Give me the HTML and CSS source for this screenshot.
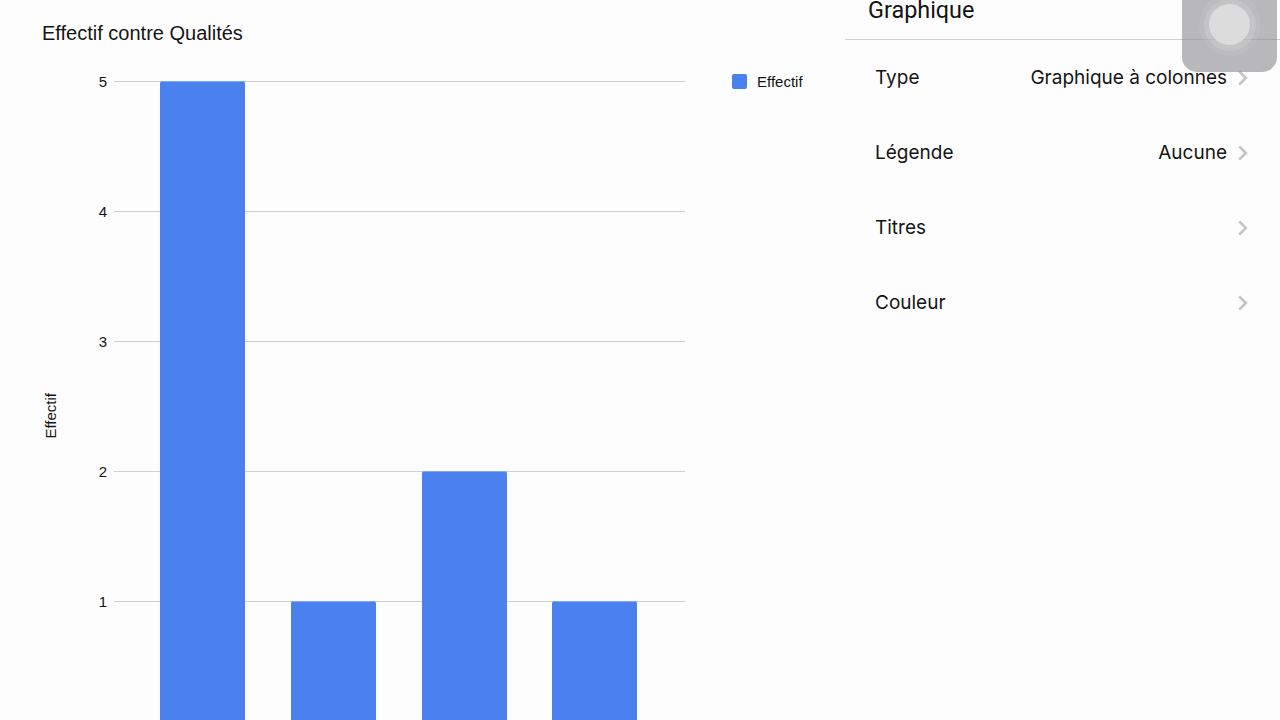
FILE: index.html
```html
<!DOCTYPE html>
<html lang="fr">
<head>
    <meta charset="UTF-8">
    <title>Graphique</title>
    <link rel="stylesheet" href="styles.css">
</head>
<body>
    <main class="chart-pane">
        <h1 class="chart-title">Effectif contre Qualités</h1>
        <div class="chart">
            <div class="axis-title">Effectif</div>
            <div class="axis-labels">
                <span>5</span>
                <span>4</span>
                <span>3</span>
                <span>2</span>
                <span>1</span>
            </div>
            <div class="plot">
                <div class="grid-row"></div>
                <div class="grid-row"></div>
                <div class="grid-row"></div>
                <div class="grid-row"></div>
                <div class="grid-row"></div>
                <div class="bars">
                    <div class="bar" style="height: 650px"></div>
                    <div class="bar" style="height: 130px"></div>
                    <div class="bar" style="height: 260px"></div>
                    <div class="bar" style="height: 130px"></div>
                </div>
            </div>
            <div class="legend">
                <span class="legend-swatch"></span>
                <span>Effectif</span>
            </div>
        </div>
    </main>

    <aside class="settings-pane">
        <h2 class="settings-title">Graphique</h2>
        <ul class="settings-list">
            <li class="settings-row">
                <span>Type</span>
                <span class="settings-value">Graphique à colonnes</span>
                <svg class="chevron" viewBox="0 0 10 16"><path d="M2 2l6 6-6 6"/></svg>
            </li>
            <li class="settings-row">
                <span>Légende</span>
                <span class="settings-value">Aucune</span>
                <svg class="chevron" viewBox="0 0 10 16"><path d="M2 2l6 6-6 6"/></svg>
            </li>
            <li class="settings-row">
                <span>Titres</span>
                <svg class="chevron" viewBox="0 0 10 16"><path d="M2 2l6 6-6 6"/></svg>
            </li>
            <li class="settings-row">
                <span>Couleur</span>
                <svg class="chevron" viewBox="0 0 10 16"><path d="M2 2l6 6-6 6"/></svg>
            </li>
        </ul>
    </aside>

    <!-- iOS assistive touch button -->
    <div class="touch-button">
        <div class="touch-ring-outer">
            <div class="touch-ring-inner">
                <div class="touch-dot"></div>
            </div>
        </div>
    </div>
</body>
</html>
```

FILE: styles.css
```css
* {
    margin: 0;
    padding: 0;
    box-sizing: border-box;
}

body {
    display: flex;
    height: 720px;
    overflow: hidden;
    background-color: #fefdfe;
    color: #141414;
    font-family: "Liberation Sans", Arial, sans-serif;
}

/* Chart */
.chart-pane {
    flex: 0 0 845px;
    padding: 22px 0 0 42px;
}

.chart-title {
    font-size: 20px;
    font-weight: normal;
    line-height: 22px;
    margin-bottom: 37px;
}

.chart {
    display: flex;
    align-items: flex-start;
}

.axis-title {
    writing-mode: vertical-rl;
    transform: rotate(180deg);
    width: 17px;
    margin-top: 312px;
    font-size: 15px;
}

.axis-labels {
    display: flex;
    flex-direction: column;
    width: 48px;
    margin-right: 7px;
    text-align: right;
    font-size: 15px;
}

.axis-labels span {
    height: 130px;
    line-height: 16px;
    margin-top: -7px;
    margin-bottom: 7px;
}

.plot {
    position: relative;
    width: 571px;
    height: 650px;
}

.grid-row {
    height: 130px;
    border-top: 1px solid #cfd0d6;
}

.bars {
    position: absolute;
    top: 0;
    left: 46px;
    display: flex;
    align-items: flex-end;
    gap: 45.8px;
    height: 650px;
}

.bar {
    width: 85px;
    background-color: #4a81ee;
    border-top: 1px solid #7fa5f1;
    border-radius: 2px 2px 0 0;
}

.legend {
    display: flex;
    align-items: center;
    gap: 10px;
    margin: -8px 0 0 47px;
    font-size: 15px;
    line-height: 17px;
}

.legend-swatch {
    width: 15px;
    height: 15px;
    background-color: #4a81ee;
    border-radius: 2px;
}

/* Settings */
.settings-pane {
    flex: 1;
    font-family: Inter, "Liberation Sans", sans-serif;
    font-size: 19px;
}

.settings-title {
    height: 40px;
    padding: 0 0 0 23px;
    border-bottom: 1px solid #cfcfd3;
    font-family: Roboto, sans-serif;
    font-size: 23.4px;
    font-weight: normal;
    line-height: 21px;
}

.settings-list {
    list-style: none;
}

.settings-row {
    display: flex;
    align-items: center;
    height: 75px;
    padding: 0 32px 0 30px;
}

.settings-value {
    margin-left: auto;
}

.chevron {
    width: 11px;
    height: 18px;
    margin-left: auto;
    fill: none;
    stroke: #c4c4c7;
    stroke-width: 2.4;
}

.settings-value + .chevron {
    margin-left: 10px;
}

/* Assistive touch */
.touch-button {
    position: absolute;
    top: -23px;
    left: 1182px;
    display: flex;
    align-items: center;
    justify-content: center;
    width: 95px;
    height: 95px;
    border-radius: 15px;
    background-color: rgba(140, 140, 142, 0.62);
}

.touch-ring-outer {
    display: flex;
    align-items: center;
    justify-content: center;
    width: 62px;
    height: 62px;
    border-radius: 50%;
    background-color: rgba(200, 200, 202, 0.25);
}

.touch-ring-inner {
    display: flex;
    align-items: center;
    justify-content: center;
    width: 52px;
    height: 52px;
    border-radius: 50%;
    background-color: rgba(215, 215, 217, 0.3);
}

.touch-dot {
    width: 41px;
    height: 41px;
    border-radius: 50%;
    background-color: #dcdcdd;
}
```
